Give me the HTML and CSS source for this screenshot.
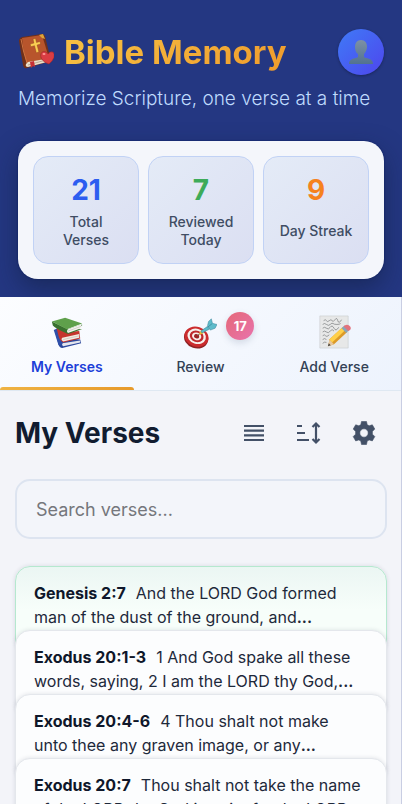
FILE: index.html
```
<!DOCTYPE html>
<html lang="en">
<head>
    <meta charset="UTF-8">
    <meta name="viewport" content="width=device-width, initial-scale=1.0">
    <title>Bible Memory</title>
    <link rel="stylesheet" href="styles.css">
</head>
<body>
    <header class="header">
        <div class="header-top">
            <svg class="logo" viewBox="0 0 36 36" aria-hidden="true">
                <path d="M1 7Q1 4 4 3L24 0Q26 0 27 2L33 27 9 34Q6 35 5 31Z" fill="#713019"/>
                <path d="M4 4L24 1 31 24 9 29Q6 22 4 4Z" fill="#b8552c"/>
                <path d="M3 5q2 12 6 24" fill="none" stroke="#d07440" stroke-width="1"/>
                <path d="M21 1l4-1 2 5-3-1z" fill="#dca53a"/>
                <path d="M8 30Q7 33 10 33L29 28 27 25 10 28Z" fill="#eadfca"/>
                <path d="M10 31l18-5" stroke="#a69179" stroke-width=".7"/>
                <path d="M12 28l4-1 1 6-2-1-2 2z" fill="#c52f35"/>
                <path d="M15 5l2.5-.5 1 4 3.5-1 .6 2.5-3.5 1 1.8 7-2.6.7-1.8-7-3.7 1-.6-2.6 3.7-1z" fill="#f9cd52" stroke="#8c3c1b" stroke-width=".4"/>
                <path d="M31 30C21 27 21 18 26 17.500q3 0 4 2.500 2-3 5-2 4 5-4 12z" fill="#da3d43" stroke="#9c252c" stroke-width=".6"/>
                <ellipse cx="26" cy="20" rx="1.500" ry="1" fill="#ff9794"/>
            </svg>
            <h1 class="title">Bible Memory</h1>
            <button class="avatar" type="button" aria-label="Account">
                <svg viewBox="0 0 26 26" aria-hidden="true">
                    <defs>
                        <linearGradient id="person" x1="0" y1="0" x2="0" y2="1">
                            <stop stop-color="#7d91a5"/>
                            <stop offset="1" stop-color="#527291"/>
                        </linearGradient>
                    </defs>
                    <path d="M13 1c4 0 6 3 6 7 0 3-2 6-3 7v3c3 2 9 1 9 7H1c0-6 6-5 9-7v-3C8 14 7 11 7 8c0-4 2-7 6-7z" fill="url(#person)"/>
                </svg>
            </button>
        </div>
        <p class="subtitle">Memorize Scripture, one verse at a time</p>
        <div class="stats">
            <div class="stat">
                <span class="stat-number blue">21</span>
                <span class="stat-label">Total Verses</span>
            </div>
            <div class="stat">
                <span class="stat-number green">7</span>
                <span class="stat-label">Reviewed Today</span>
            </div>
            <div class="stat">
                <span class="stat-number orange">9</span>
                <span class="stat-label">Day Streak</span>
            </div>
        </div>
    </header>

    <div class="page">
        <nav class="tabs">
            <button class="tab active" type="button">
                <svg class="tab-icon" viewBox="0 0 36 36" aria-hidden="true">
                    <path d="M6 20l6 4 20 2 1 4-20 5q-3 0-4-4z" fill="#2c489c"/>
                    <path d="M13 30l19-3v2l-18 4q-2-1-1-3z" fill="#e4e6ee"/>
                    <path d="M4 16l4-2 6 12-1 5-4 1z" fill="#2f4fa8"/>
                    <path d="M7 14l11 4 13-1 1 8-18 4q-4-2-5-7z" fill="#c5352d"/>
                    <path d="M13 24l18-4v4l-17 4q-3-2-1-4z" fill="#f2ece4"/>
                    <path d="M14 26l17-4" stroke="#b9aaa1" stroke-width=".5"/>
                    <path d="M2 7l17 8 15-5v1l-3 1v3l3 0-15 5Q5 14 3 11z" fill="#3a722f"/>
                    <path d="M2 7L16 3 34 9 18 15Z" fill="#5fa04b"/>
                    <path d="M19 15l14-5v4l-14 5q-2-2 0-4z" fill="#f5f4ef"/>
                    <path d="M19 17l14-5" stroke="#aba99e" stroke-width=".5"/>
                </svg>
                <span>My Verses</span>
            </button>
            <button class="tab" type="button">
                <svg class="tab-icon" viewBox="0 2 36 36" aria-hidden="true">
                    <g transform="rotate(18 14 26)">
                        <ellipse cx="14" cy="26.500" rx="13" ry="10.800" fill="#8f2224"/>
                        <ellipse cx="14" cy="25" rx="13" ry="10.500" fill="#cb2c2e"/>
                        <ellipse cx="14" cy="24.500" rx="10" ry="8" fill="#f7f1ed"/>
                        <ellipse cx="14" cy="24.500" rx="7.500" ry="6" fill="#be2a2d"/>
                        <ellipse cx="14" cy="24.500" rx="5" ry="4" fill="#f8eeea"/>
                        <ellipse cx="14" cy="24.500" rx="2.800" ry="2.200" fill="#9b2325"/>
                    </g>
                    <path d="M15 24l4-3" stroke="#6d5a42"/>
                    <path d="M17 21l3-3 2 3-4 2z" fill="#e9b936"/>
                    <path d="M19 19l7-5 2 3-8 4zM26 13l1-4 3-3 1 4 1 1 4 1-2 4-5 2z" fill="#5fbccb" stroke="#347f93" stroke-width=".5"/>
                    <path d="M26 15l5-4" stroke="#347f93" stroke-width=".7"/>
                </svg>
                <span>Review</span>
                <span class="badge">17</span>
            </button>
            <button class="tab" type="button">
                <svg class="tab-icon" viewBox="0 0 36 36" aria-hidden="true">
                    <path d="M3 1h30v34H3z" fill="#e7e8e8" stroke="#c7cacb" stroke-width=".6"/>
                    <path d="M7 6q2-2 3 0t3 0 3 0 3-1 3 1 4-1M6 10q2-2 4 0t4 0 3-1 4 1 4-1M6 14q2-2 4 0t4-1 4 1 5-1M6 18q2-2 4 0t4-1 4 0M6 22q2-2 3 0t4-1M6 26q2-2 4 0M6 30q2-2 4-1" fill="none" stroke="#707475" stroke-width=".7"/>
                    <path d="M13 26L27 13l5 5-14 13-6 2z" fill="#dc9a28"/>
                    <path d="M13 26L27 13l3 3-14 13z" fill="#ffd04a"/>
                    <path d="M13 26l5 5-6 2z" fill="#e7c79d"/>
                    <path d="M11.500 33l1-3 2 2z" fill="#434343"/>
                    <path d="M26 14l3-3 5 5-3 3z" fill="#87a5b8"/>
                    <path d="M28 12q3-3 6-1t1 5l-2 1z" fill="#e3727c"/>
                </svg>
                <span>Add Verse</span>
            </button>
        </nav>

        <main class="content">
            <div class="toolbar">
                <h2>My Verses</h2>
                <div class="actions">
                    <button class="icon-button" type="button" aria-label="List view">
                        <svg viewBox="0 0 24 24" aria-hidden="true">
                            <path d="M2 5h20M2 9.7h20M2 14.3h20M2 19h20" stroke="currentColor" stroke-width="2.2"/>
                        </svg>
                    </button>
                    <button class="icon-button" type="button" aria-label="Sort verses">
                        <svg viewBox="0 0 24 24" aria-hidden="true">
                            <path d="M0 5h5M0 12h8M0 19h12M19 3v18M15.5 6L19 2.5 22.5 6M15.5 18l3.5 3.5 3.5-3.5" fill="none" stroke="currentColor" stroke-width="2.2"/>
                        </svg>
                    </button>
                    <button class="icon-button" type="button" aria-label="Settings">
                        <svg viewBox="0 0 24 24" aria-hidden="true">
                            <path d="M9.5 0.5h5l.7 3.2 2 1.1 3.1-1 2.5 4.3L20.4 10.4v2.8l2.4 2.4-2.5 4.3-3.1-1-2 1.1-.7 3.5h-5l-.7-3.5-2-1.1-3.1 1-2.5-4.3 2.4-2.4v-2.8L1.2 8.1l2.5-4.3 3.1 1 2-1.1zM12 7.8a4.2 4.2 0 1 0 0 8.4 4.2 4.2 0 0 0 0-8.4z" fill="currentColor" stroke="currentColor" stroke-width=".6" stroke-linejoin="round" fill-rule="evenodd"/>
                        </svg>
                    </button>
                </div>
            </div>

            <input class="search" type="text" placeholder="Search verses..." aria-label="Search verses">

            <div class="verse-list">
                <article class="verse mastered"><p><strong>Genesis 2:7</strong>And the LORD God formed man of the dust of the ground, and<b>...</b></p></article>
                <article class="verse"><p><strong>Exodus 20:1-3</strong>1 And God spake all these words, saying, 2 I am the LORD thy God,<b>...</b></p></article>
                <article class="verse"><p><strong>Exodus 20:4-6</strong>4 Thou shalt not make unto thee any graven image, or any<b>...</b></p></article>
                <article class="verse"><p><strong>Exodus 20:7</strong>Thou shalt not take the name of the LORD thy God in vain; for the LORD<b>...</b></p></article>
            </div>
        </main>
    </div>
</body>
</html>
```
FILE: styles.css
```
* {
    box-sizing: border-box;
}
body {
    margin: 0;
    font-family: Inter, "Liberation Sans", sans-serif;
    background: #f3f4f9;
    color: #1e293b;
}
h1, h2, p {
    margin: 0;
}
button {
    padding: 0;
    border: none;
    background: none;
    font-family: inherit;
    color: inherit;
    cursor: pointer;
}
.header {
    padding: 29px 18px 18px;
    background: #243782;
}
.header-top {
    display: flex;
    align-items: center;
    height: 46px;
}
.logo {
    width: 36px;
    height: 36px;
    margin-right: 10px;
}
.title {
    font-size: 33px;
    line-height: 46px;
    font-weight: 700;
    color: transparent;
    background: linear-gradient(135deg, #f7c244, #ef9b2c);
    background-clip: text;
    -webkit-background-clip: text;
}
.avatar {
    display: flex;
    align-items: center;
    justify-content: center;
    width: 46px;
    height: 46px;
    margin-left: auto;
    border-radius: 50%;
    background: linear-gradient(135deg, #3f7af7, #4e46ed);
    box-shadow: 0 1px 3px rgba(0,0,0,0.3);
}
.avatar svg {
    width: 26px;
    height: 26px;
}
.subtitle {
    margin: 10px 0 28px;
    font-size: 19px;
    line-height: 28px;
    font-weight: 300;
    color: #bfdbfe;
}
.stats {
    display: grid;
    grid-template-columns: repeat(3, 1fr);
    gap: 9px;
    padding: 15px;
    border-radius: 20px;
    background: #f4f6fb;
    box-shadow: 0 10px 24px rgba(15,30,60,0.5), 0 0 2px #071b68;
}
.stat {
    display: flex;
    flex-direction: column;
    align-items: center;
    min-height: 108px;
    padding: 16px 14px 8px;
    border: 1px solid #c1d2f5;
    border-radius: 15px;
    background: linear-gradient(135deg, #e4ebf7, #dbdff2);
    text-align: center;
}
.stat-number {
    font-size: 28px;
    line-height: 34px;
    font-weight: 700;
}
.blue {
    color: #2c5df0;
}
.green {
    color: #3dab59;
}
.orange {
    color: #f5821f;
}
.stat-label {
    display: flex;
    flex: 1;
    align-items: center;
    font-size: 14px;
    line-height: 18px;
    font-weight: 500;
    color: #404d64;
}
.page {
    border-right: 1px solid #c9cee3;
}
.tabs {
    display: grid;
    grid-template-columns: repeat(3, 1fr);
    border-bottom: 1px solid #dfe8f2;
    background: linear-gradient(135deg, #fcfdff, #edf3fd);
}
.tab {
    position: relative;
    display: flex;
    flex-direction: column;
    align-items: center;
    gap: 8px;
    padding: 18px 0 10px;
    border-bottom: 3px solid transparent;
    font-size: 14px;
    line-height: 20px;
    font-weight: 500;
    color: #334155;
}
.tab.active {
    font-weight: 600;
    color: #1d3fd8;
}
.tab.active::after {
    content: "";
    position: absolute;
    left: 0;
    right: 0;
    bottom: -3px;
    height: 3px;
    border-radius: 3px 3px 0 0;
    background: linear-gradient(90deg, #efb343, #e79a2b);
}
.tab-icon {
    width: 34px;
    height: 34px;
}
.badge {
    position: absolute;
    top: 15px;
    right: 13px;
    width: 28px;
    border-radius: 14px;
    background: linear-gradient(135deg, #e56878, #e873ad);
    box-shadow: 0 3px 7px rgba(80,100,130,0.2);
    font-size: 13px;
    line-height: 28px;
    font-weight: 700;
    color: #fff;
}
.content {
    padding: 23px 14px 20px 15px;
}
.toolbar {
    display: flex;
    align-items: center;
    justify-content: space-between;
    margin-bottom: 27px;
    padding-right: 3px;
}
.toolbar h2 {
    font-size: 28px;
    line-height: 38px;
    font-weight: 700;
    color: #111c30;
}
.actions {
    display: flex;
    gap: 15px;
}
.icon-button {
    display: flex;
    align-items: center;
    justify-content: center;
    width: 40px;
    height: 38px;
    color: #435067;
}
.icon-button svg {
    width: 24px;
    height: 24px;
}
.search {
    display: block;
    width: 100%;
    height: 60px;
    margin-bottom: 27px;
    padding: 0 19px;
    border: 2px solid #dde4f0;
    border-radius: 15px;
    background: #f3f5fa;
    font-family: inherit;
    font-size: 18px;
    color: #1e293b;
}
.search::placeholder {
    color: #75777c;
}
.verse {
    min-height: 88px;
    padding: 14px 22px 14px 18px;
    border: 1px solid #e4e7ec;
    border-radius: 15px;
    background: #fcfdfe;
    box-shadow: 0 0 4px rgba(30,41,59,0.13);
    font-size: 16px;
    line-height: 24px;
}
/* cards are stacked, each one covers the foot of the card before it */
.verse + .verse {
    margin-top: -24px;
}
.verse.mastered {
    border-color: #b5e8cf;
    background: linear-gradient(#ebf6f3, #f7fefa 50%);
}
.verse strong {
    margin-right: 10px;
    font-weight: 700;
    color: #0f172a;
}
.verse b {
    font-weight: 600;
}
```
